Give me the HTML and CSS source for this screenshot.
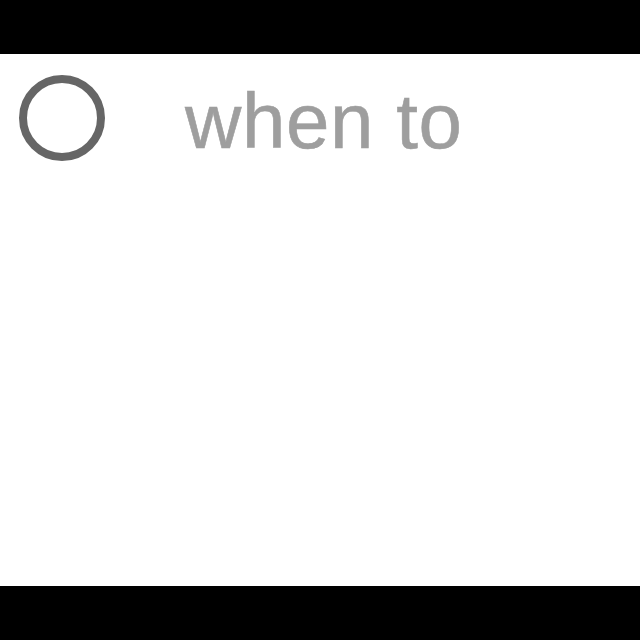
FILE: index.html
```html
<!DOCTYPE html>
<html>
<head>
<meta charset="utf-8">
<link rel="stylesheet" href="styles.css">
</head>
<body>
<div class="bar"></div>
<main class="screen">
  <div class="row">
    <div class="check"></div>
    <div class="label">when to</div>
  </div>
</main>
<div class="bar"></div>
</body>
</html>
```
FILE: styles.css
```css
html, body {
  margin: 0;
  padding: 0;
  background: #000;
}
body {
  width: 640px;
  height: 640px;
  display: flex;
  flex-direction: column;
  font-family: "Liberation Sans", Arial, sans-serif;
}
.bar {
  height: 54px;
  background: #000;
  flex: none;
}
.screen {
  height: 532px;
  background: #fff;
  flex: none;
}
.row {
  display: flex;
  align-items: flex-start;
  padding: 21px 0 0 19px;
  gap: 80px;
}
.check {
  width: 86px;
  height: 86px;
  box-sizing: border-box;
  border: 8px solid #666;
  border-radius: 50%;
  flex: none;
}
.label {
  margin-top: 7px;
  font-size: 78px;
  line-height: 78px;
  letter-spacing: 0.6px;
  color: #9e9e9e;
  -webkit-text-stroke: 0.6px #9e9e9e;
}
```
